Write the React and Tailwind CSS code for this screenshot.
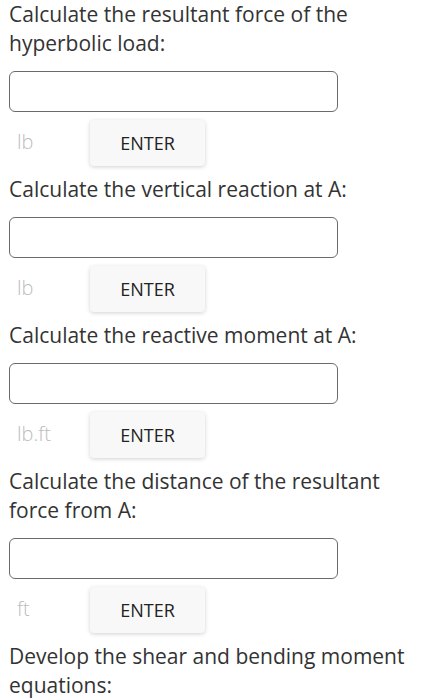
const questions = [
  { prompt: "Calculate the resultant force of the hyperbolic load:", unit: "lb" },
  { prompt: "Calculate the vertical reaction at A:", unit: "lb" },
  { prompt: "Calculate the reactive moment at A:", unit: "lb.ft" },
  { prompt: "Calculate the distance of the resultant force from A:", unit: "ft" },
];

function AnswerBlock({ prompt, unit }) {
  return (
    <div className="flex flex-col">
      <p className="text-[21px] leading-[29px] text-[#333]">{prompt}</p>
      <input
        type="text"
        className="mt-[13px] h-[41px] w-[329px] rounded-[6px] border-[1.5px] border-[#6b6b6b] bg-white px-2 outline-none"
      />
      <div className="mt-[8px] flex items-center">
        <span className="w-[81px] pb-[3px] pl-[8px] text-[20px] font-light text-[#bdbdbd]">{unit}</span>
        <button className="h-[46px] w-[115px] rounded-[4px] bg-[#f8f8f8] text-[18px] text-[#222] shadow-[0_1px_4px_rgba(0,0,0,0.18)]">
          ENTER
        </button>
      </div>
    </div>
  );
}

export default function App() {
  return (
    <div
      className="min-h-screen bg-white pl-[9px] pr-[6px]"
      style={{ fontFamily: '"Open Sans", "Liberation Sans", sans-serif' }}
    >
      <div className="flex flex-col gap-[9px]">
        {questions.map((q, i) => (
          <AnswerBlock key={i} prompt={q.prompt} unit={q.unit} />
        ))}
        <p className="text-[21px] leading-[29px] text-[#333]">
          Develop the shear and bending moment equations:
        </p>
      </div>
    </div>
  );
}
